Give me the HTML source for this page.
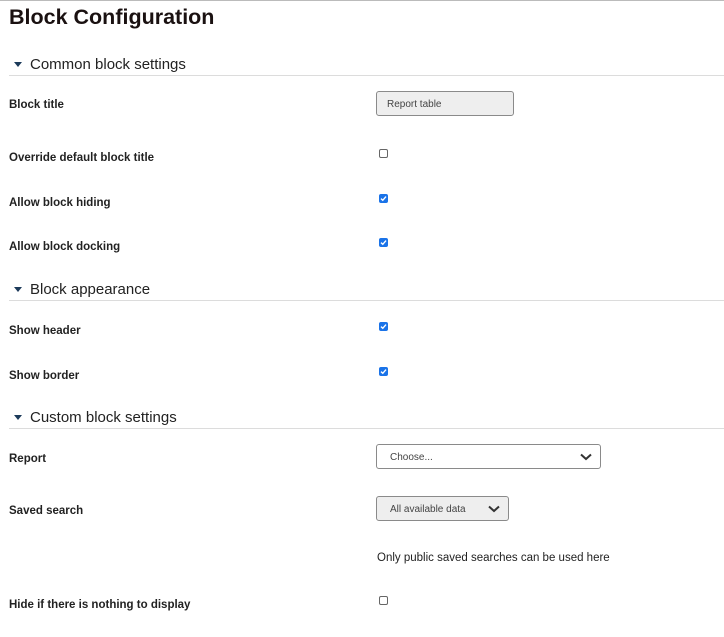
<!DOCTYPE html>
<html><head><style>
body{margin:0;width:724px;height:637px;background:#fff;font-family:"Liberation Sans",sans-serif;color:#1d1d1d;position:relative;overflow:hidden}
.a{position:absolute}
.top{left:0;top:0;width:724px;height:1px;background:#bbb}
h1{position:absolute;left:9px;top:5px;margin:0;font-size:21.5px;font-weight:bold;color:#1a1111}
.sh{position:absolute;left:30px;font-size:15px;color:#222;line-height:18px}
.tri{position:absolute;left:14px;width:0;height:0;border-left:4.5px solid transparent;border-right:4.5px solid transparent;border-top:5px solid #1c3a5a}
.ln{position:absolute;left:9px;width:715px;height:1px;background:#dcdcdc}
.lb{position:absolute;left:9px;font-size:11.5px;font-weight:bold;color:#222;line-height:14px}
.cb{position:absolute;left:379px;width:7px;height:7px;border:1px solid #666;border-radius:2px;background:#fff}
.ck{position:absolute;left:379px;width:9px;height:9px;border-radius:2px;background:#1a73e8}
.ck svg{position:absolute;left:0;top:0}
.inp{position:absolute;border:1px solid #8a8a8a;border-radius:3px;font-size:10px;color:#444;box-sizing:border-box}
</style></head><body>
<div class="a top"></div>
<h1>Block Configuration</h1>
<div class="tri" style="top:62px"></div><div class="sh" style="top:56px">Common block settings</div><div class="ln" style="top:75px"></div>
<div class="lb" style="top:98px">Block title</div>
<div class="inp" style="left:376px;top:91px;width:138px;height:25px;background:#eee;padding:7px 0 0 10px">Report table</div>
<div class="lb" style="top:151px">Override default block title</div><div class="cb" style="top:149px"></div>
<div class="lb" style="top:196px">Allow block hiding</div><div class="ck" style="top:194px"><svg width="9" height="9"><path d="M2 4.6L3.8 6.3L7 2.6" stroke="#fff" stroke-width="1.4" fill="none"/></svg></div>
<div class="lb" style="top:240px">Allow block docking</div><div class="ck" style="top:238px"><svg width="9" height="9"><path d="M2 4.6L3.8 6.3L7 2.6" stroke="#fff" stroke-width="1.4" fill="none"/></svg></div>
<div class="tri" style="top:287px"></div><div class="sh" style="top:281px">Block appearance</div><div class="ln" style="top:300px"></div>
<div class="lb" style="top:324px">Show header</div><div class="ck" style="top:322px"><svg width="9" height="9"><path d="M2 4.6L3.8 6.3L7 2.6" stroke="#fff" stroke-width="1.4" fill="none"/></svg></div>
<div class="lb" style="top:369px">Show border</div><div class="ck" style="top:367px"><svg width="9" height="9"><path d="M2 4.6L3.8 6.3L7 2.6" stroke="#fff" stroke-width="1.4" fill="none"/></svg></div>
<div class="tri" style="top:415px"></div><div class="sh" style="top:409px">Custom block settings</div><div class="ln" style="top:428px"></div>
<div class="lb" style="top:452px">Report</div>
<div class="inp" style="left:376px;top:444px;width:225px;height:25px;background:#fff;padding:7px 0 0 13px">Choose...<svg class="a" style="left:203px;top:8px" width="12" height="8"><path d="M1 1.5L6 6L11 1.5" stroke="#333" stroke-width="2" fill="none"/></svg></div>
<div class="lb" style="top:504px">Saved search</div>
<div class="inp" style="left:376px;top:496px;width:133px;height:25px;background:#eee;padding:7px 0 0 13px">All available data<svg class="a" style="left:111px;top:8px" width="12" height="8"><path d="M1 1.5L6 6L11 1.5" stroke="#333" stroke-width="2" fill="none"/></svg></div>
<div class="a" style="left:377px;top:552px;font-size:11.5px;color:#222">Only public saved searches can be used here</div>
<div class="lb" style="top:598px">Hide if there is nothing to display</div><div class="cb" style="top:596px"></div>
</body></html>
